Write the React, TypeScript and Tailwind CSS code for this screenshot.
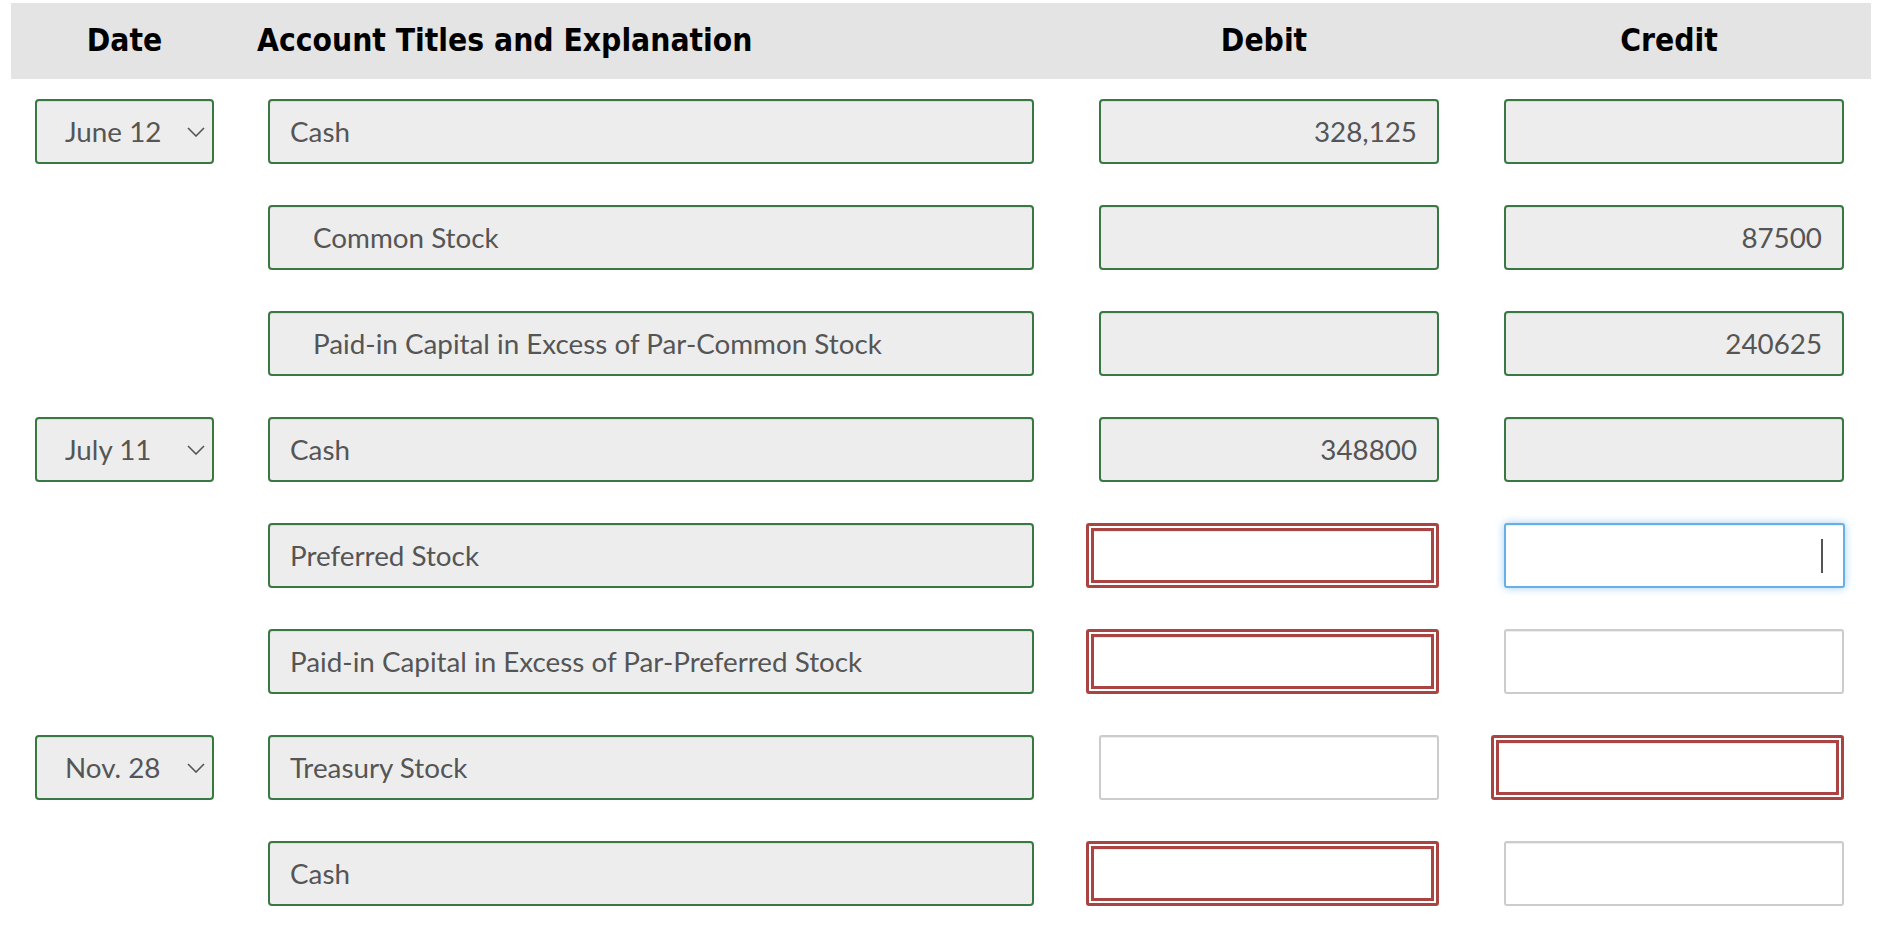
import React from 'react';

type Cell = { kind: 'filled'; value?: string } | { kind: 'error' } | { kind: 'empty' } | { kind: 'focus' };

type Row = {
    date?: string;
    account: string;
    indent?: boolean;
    debit: Cell;
    credit: Cell;
};

const rows: Row[] = [
    { date: 'June 12', account: 'Cash', debit: { kind: 'filled', value: '328,125' }, credit: { kind: 'filled' } },
    { account: 'Common Stock', indent: true, debit: { kind: 'filled' }, credit: { kind: 'filled', value: '87500' } },
    { account: 'Paid-in Capital in Excess of Par-Common Stock', indent: true, debit: { kind: 'filled' }, credit: { kind: 'filled', value: '240625' } },
    { date: 'July 11', account: 'Cash', debit: { kind: 'filled', value: '348800' }, credit: { kind: 'filled' } },
    { account: 'Preferred Stock', debit: { kind: 'error' }, credit: { kind: 'focus' } },
    { account: 'Paid-in Capital in Excess of Par-Preferred Stock', debit: { kind: 'error' }, credit: { kind: 'empty' } },
    { date: 'Nov. 28', account: 'Treasury Stock', debit: { kind: 'empty' }, credit: { kind: 'error' } },
    { account: 'Cash', debit: { kind: 'error' }, credit: { kind: 'empty' } },
];

const body = "font-['Lato','Liberation_Sans',sans-serif] text-[27.8px] text-[#555555]";
const green = 'h-[65px] rounded-[4px] border-2 border-[#3a7843] bg-[#ededed] shadow-[inset_0_1px_1px_rgba(0,0,0,0.075)]';

const Chevron = () => (
    <svg width="18" height="10" viewBox="0 0 18 10" fill="none" stroke="#555555" strokeWidth="1.6">
        <polyline points="1,1 9,9 17,1" />
    </svg>
);

const AmountCell = ({ cell }: { cell: Cell }) => {
    if (cell.kind === 'filled') {
        return (
            <div className={`${green} w-[340px] flex items-center justify-end pr-[20px] ${body}`}>
                {cell.value}
            </div>
        );
    }
    if (cell.kind === 'error') {
        return (
            <div className="h-[65px] w-[353px] rounded-[3px] border-[3px] border-[#a94442] bg-white p-[2px]">
                <div className="h-full w-full border-[3px] border-[#a94442] bg-white shadow-[inset_0_1px_1px_rgba(0,0,0,0.075)]" />
            </div>
        );
    }
    if (cell.kind === 'focus') {
        return (
            <div className="h-[65px] w-[341px] -mr-px rounded-[3px] border-2 border-[#66afe9] bg-white flex items-center justify-end pr-[20px] shadow-[inset_0_1px_1px_rgba(0,0,0,0.075),0_0_8px_rgba(102,175,233,0.6)]">
                <div className="h-[34px] w-[2px] bg-[#555555]" />
            </div>
        );
    }
    return (
        <div className="h-[65px] w-[340px] rounded-[3px] border-2 border-[#cccccc] bg-white shadow-[inset_0_1px_1px_rgba(0,0,0,0.075)]" />
    );
};

export default function App() {
    return (
        <div className="min-h-screen w-full bg-white pt-[3px] pl-[11px]">
            {/* Header */}
            <div className="h-[76px] w-[1860px] bg-[#e4e4e4] flex items-center pl-[24px] font-['DejaVu_Sans_Condensed','DejaVu_Sans',sans-serif] font-stretch-condensed font-bold text-[31.5px] text-black">
                <div className="w-[179px] text-center">Date</div>
                <div className="w-[820px] pl-[43px]">Account Titles and Explanation</div>
                <div className="w-[405px] flex justify-end">
                    <div className="w-[340px] pr-[10px] text-center">Debit</div>
                </div>
                <div className="w-[405px] flex justify-end">
                    <div className="w-[340px] pr-[10px] text-center">Credit</div>
                </div>
            </div>

            {/* Journal rows */}
            <div className="flex flex-col gap-[41px] pt-[20px] pl-[24px]">
                {rows.map((r, i) => (
                    <div key={i} className="flex items-center h-[65px]">
                        <div className="w-[179px]">
                            {r.date && (
                                <div className={`${green} flex items-center justify-between pl-[28px] pr-[7px] ${body}`}>
                                    <span>{r.date}</span>
                                    <Chevron />
                                </div>
                            )}
                        </div>
                        <div className={`${green} ml-[54px] w-[766px] flex items-center ${r.indent ? 'pl-[43px]' : 'pl-[20px]'} ${body}`}>
                            {r.account}
                        </div>
                        <div className="w-[405px] flex justify-end">
                            <AmountCell cell={r.debit} />
                        </div>
                        <div className="w-[405px] flex justify-end">
                            <AmountCell cell={r.credit} />
                        </div>
                    </div>
                ))}
            </div>
        </div>
    );
}
